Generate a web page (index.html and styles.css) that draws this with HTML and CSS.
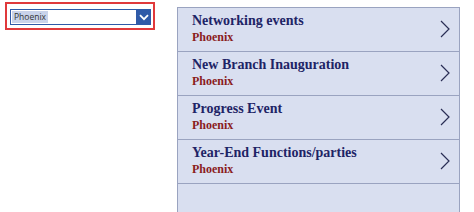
FILE: index.html
```html
<!DOCTYPE html>
<html>
<head>
<meta charset="utf-8">
<link rel="stylesheet" href="styles.css">
</head>
<body>
<div class="page">
  <div class="filter">
    <div class="dropdown">
      <span class="value">Phoenix</span>
      <span class="chev">
        <svg width="10" height="7" viewBox="0 0 10 7"><path d="M1 1.2 L5 5.2 L9 1.2" fill="none" stroke="#fff" stroke-width="1.8"/></svg>
      </span>
    </div>
  </div>
  <div class="gallery">
    <div class="row">
      <div class="text"><div class="title">Networking events</div><div class="sub">Phoenix</div></div>
      <svg class="arrow" width="10" height="18" viewBox="0 0 10 18"><path d="M1 1 L9 9 L1 17" fill="none" stroke="#2a2e55" stroke-width="1.2"/></svg>
    </div>
    <div class="row">
      <div class="text"><div class="title">New Branch Inauguration</div><div class="sub">Phoenix</div></div>
      <svg class="arrow" width="10" height="18" viewBox="0 0 10 18"><path d="M1 1 L9 9 L1 17" fill="none" stroke="#2a2e55" stroke-width="1.2"/></svg>
    </div>
    <div class="row">
      <div class="text"><div class="title">Progress Event</div><div class="sub">Phoenix</div></div>
      <svg class="arrow" width="10" height="18" viewBox="0 0 10 18"><path d="M1 1 L9 9 L1 17" fill="none" stroke="#2a2e55" stroke-width="1.2"/></svg>
    </div>
    <div class="row">
      <div class="text"><div class="title">Year-End Functions/parties</div><div class="sub">Phoenix</div></div>
      <svg class="arrow" width="10" height="18" viewBox="0 0 10 18"><path d="M1 1 L9 9 L1 17" fill="none" stroke="#2a2e55" stroke-width="1.2"/></svg>
    </div>
    <div class="row empty"></div>
  </div>
</div>
</body>
</html>
```
FILE: styles.css
```css
html, body { margin: 0; padding: 0; background: #fff; }
.page {
  display: flex;
  align-items: flex-start;
  width: 474px;
  height: 212px;
  overflow: hidden;
}
.filter {
  margin: 2px 0 0 5px;
  width: 150px;
  height: 28px;
  border: 2px solid #e0393b;
  padding: 5px 2px 3px 3px;
  box-sizing: border-box;
  flex: none;
}
.dropdown {
  display: flex;
  height: 16px;
  border: 1px solid #2f5aa8;
  box-sizing: border-box;
  background: #fff;
}
.value {
  margin: 1px 0 0 1px;
  height: 12px;
  padding: 0 2px;
  background: #c9d3ea;
  font-family: "Open Sans", "Liberation Sans", sans-serif;
  font-size: 8.5px;
  line-height: 12px;
  color: #333;
}
.chev {
  margin: -1px -1px -1px auto;
  width: 15px;
  background: #2f5aa8;
  display: flex;
  align-items: center;
  justify-content: center;
}
.gallery {
  margin: 7px 0 0 22px;
  width: 283px;
  height: 220px;
  background: #d9dff0;
  border-left: 1px solid #9aa3c0;
  border-right: 1px solid #9aa3c0;
  border-top: 1px solid #9aa3c0;
  box-sizing: border-box;
  display: flex;
  flex-direction: column;
  flex: none;
}
.row {
  height: 44px;
  border-bottom: 1px solid #9aa3c0;
  box-sizing: border-box;
  display: flex;
  align-items: flex-start;
  padding: 5px 9px 0 14px;
  flex: none;
}
.row.empty { border-bottom: none; }
.text { flex: 1; }
.title {
  font-family: "Liberation Serif", serif;
  font-weight: bold;
  font-size: 14px;
  line-height: 16px;
  color: #1e2466;
}
.sub {
  font-family: "Liberation Serif", serif;
  font-weight: bold;
  font-size: 12px;
  line-height: 17px;
  color: #8a1c1c;
}
.arrow { flex: none; margin-top: 7px; }
```
